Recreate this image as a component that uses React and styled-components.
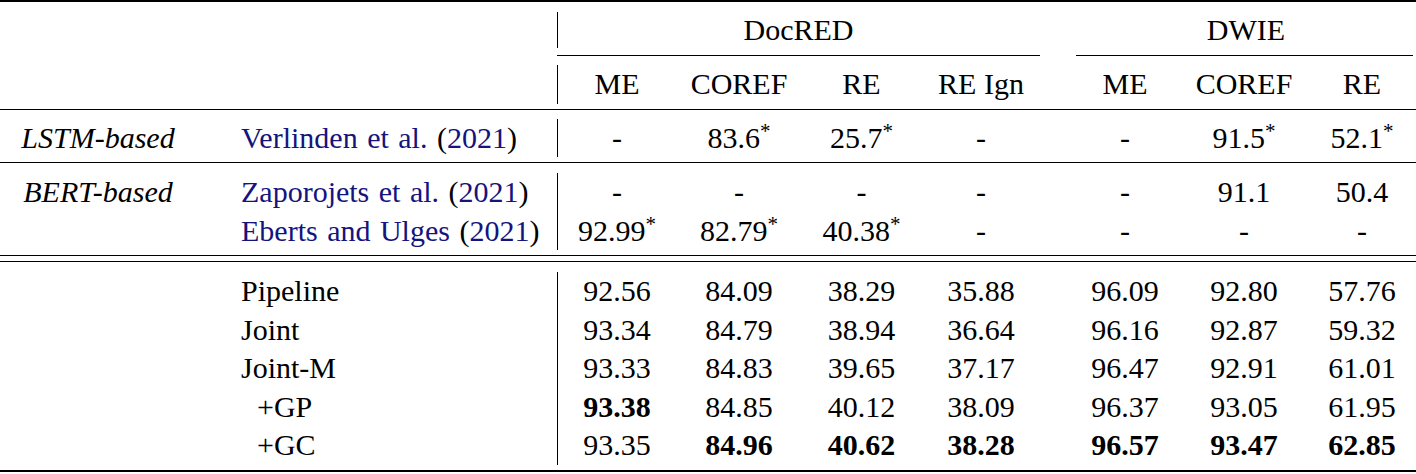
import React from "react";
import styled, { createGlobalStyle } from "styled-components";

const GlobalStyle = createGlobalStyle`
  body {
    margin: 0;
    background: #fff;
  }
`;

// category | method | ME COREF RE RE-Ign | gap | ME COREF RE
const COLUMNS = "196px 361px 120px 124px 121px 118px 36px 98px 140px 102px";
const DATA_COLS = [3, 4, 5, 6, 8, 9, 10];
const LINK = "#14147e";

const Table = styled.div`
  width: 1416px;
  font-family: "Liberation Serif", "Times New Roman", serif;
  font-size: 30px;
  color: #000;
`;

const Rule = styled.div`
  height: ${(p) => p.$weight}px;
  background: #000;
`;

const DoubleRule = styled.div`
  box-sizing: border-box;
  height: 7px;
  border-top: 1px solid #000;
  border-bottom: 1px solid #000;
`;

const Group = styled.div`
  padding: ${(p) => p.$top}px 0 ${(p) => p.$bottom}px;
`;

const Row = styled.div`
  display: grid;
  grid-template-columns: ${COLUMNS};
  height: ${(p) => p.$h || 38.5}px;
  line-height: ${(p) => p.$h || 38.5}px;
`;

const CmidRow = styled.div`
  display: grid;
  grid-template-columns: ${COLUMNS};
  height: 1px;
`;

const CmidLine = styled.div`
  grid-column: ${(p) => p.$span};
  background: #000;
  margin-right: ${(p) => p.$trim || 0}px;
`;

const Cell = styled.div`
  grid-column: ${(p) => p.$col};
  text-align: ${(p) => p.$align || "center"};
  white-space: nowrap;
  font-weight: ${(p) => (p.$bold ? 700 : 400)};
  font-style: ${(p) => (p.$italic ? "italic" : "normal")};
  padding-left: ${(p) => p.$indent || 0}px;
  padding-right: ${(p) => (p.$col === 10 ? 6 : 0)}px;
  box-shadow: ${(p) => (p.$divider ? "inset 1px 0 0 #000" : "none")};
`;

const Method = styled(Cell)`
  word-spacing: 2px;
`;

const Star = styled.span`
  font-size: 0.7em;
  line-height: 0;
  vertical-align: 0.5em;
`;

const Link = styled.span`
  color: ${LINK};
`;

const Cite = ({ name, year }) => (
  <>
    <Link>{name}</Link> (<Link>{year}</Link>)
  </>
);

const Value = ({ v }) => {
  const bold = v.startsWith("**");
  const text = bold ? v.slice(2) : v;
  const star = text.endsWith("*");
  return (
    <>
      {star ? text.slice(0, -1) : text}
      {star && <Star>*</Star>}
    </>
  );
};

const DataRow = ({ category, method, indent, values }) => (
  <Row>
    {category && (
      <Cell $col={1} $italic>
        {category}
      </Cell>
    )}
    <Method $col={2} $align="left" $indent={45 + (indent ? 16 : 0)}>
      {method}
    </Method>
    {values.map((v, i) => (
      <Cell
        key={i}
        $col={DATA_COLS[i]}
        $divider={i === 0}
        $bold={v.startsWith("**")}
      >
        <Value v={v} />
      </Cell>
    ))}
  </Row>
);

const metrics = ["ME", "COREF", "RE", "RE Ign", "ME", "COREF", "RE"];

const results = [
  { method: "Pipeline", values: ["92.56", "84.09", "38.29", "35.88", "96.09", "92.80", "57.76"] },
  { method: "Joint", values: ["93.34", "84.79", "38.94", "36.64", "96.16", "92.87", "59.32"] },
  { method: "Joint-M", values: ["93.33", "84.83", "39.65", "37.17", "96.47", "92.91", "61.01"] },
  { method: "+GP", indent: true, values: ["**93.38", "84.85", "40.12", "38.09", "96.37", "93.05", "61.95"] },
  { method: "+GC", indent: true, values: ["93.35", "**84.96", "**40.62", "**38.28", "**96.57", "**93.47", "**62.85"] },
];

export default function App() {
  return (
    <>
      <GlobalStyle />
      <Table>
        <Rule $weight={2} />
        <Group $top={10} $bottom={7}>
          <Row $h={36}>
            <Cell $col="3 / 7" $divider>
              DocRED
            </Cell>
            <Cell $col="8 / 11">DWIE</Cell>
          </Row>
        </Group>
        <CmidRow>
          <CmidLine $span="3 / 7" />
          <CmidLine $span="8 / 11" $trim={3} />
        </CmidRow>
        <Group $top={9} $bottom={5}>
          <Row>
            {metrics.map((m, i) => (
              <Cell key={i} $col={DATA_COLS[i]} $divider={i === 0}>
                {m}
              </Cell>
            ))}
          </Row>
        </Group>
        <Rule $weight={1} />
        <Group $top={9} $bottom={5}>
          <DataRow
            category="LSTM-based"
            method={<Cite name="Verlinden et al." year="2021" />}
            values={["-", "83.6*", "25.7*", "-", "-", "91.5*", "52.1*"]}
          />
        </Group>
        <Rule $weight={1} />
        <Group $top={10} $bottom={5}>
          <DataRow
            category="BERT-based"
            method={<Cite name="Zaporojets et al." year="2021" />}
            values={["-", "-", "-", "-", "-", "91.1", "50.4"]}
          />
          <DataRow
            method={<Cite name="Eberts and Ulges" year="2021" />}
            values={["92.99*", "82.79*", "40.38*", "-", "-", "-", "-"]}
          />
        </Group>
        <DoubleRule />
        <Group $top={10} $bottom={5}>
          {results.map((r) => (
            <DataRow key={r.method} {...r} />
          ))}
        </Group>
        <Rule $weight={2.5} />
      </Table>
    </>
  );
}
